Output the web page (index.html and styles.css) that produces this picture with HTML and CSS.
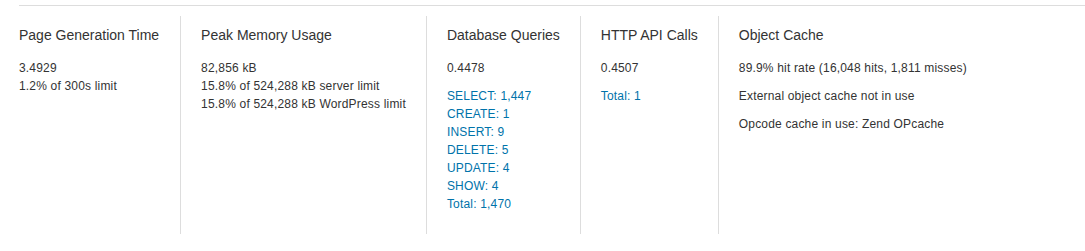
FILE: index.html
```html
<!DOCTYPE html>
<html>
<head>
<meta charset="utf-8">
<link rel="stylesheet" href="styles.css">
</head>
<body>
<div class="panel">
  <div class="overview">
    <section class="sec first">
      <h3>Page Generation Time</h3>
      <p>3.4929<br>1.2% of 300s limit</p>
    </section>
    <section class="sec">
      <h3>Peak Memory Usage</h3>
      <p>82,856 kB<br>15.8% of 524,288 kB server limit<br>15.8% of 524,288 kB WordPress limit</p>
    </section>
    <section class="sec">
      <h3>Database Queries</h3>
      <p>0.4478</p>
      <p><a href="#">SELECT: 1,447</a><br><a href="#">CREATE: 1</a><br><a href="#">INSERT: 9</a><br><a href="#">DELETE: 5</a><br><a href="#">UPDATE: 4</a><br><a href="#">SHOW: 4</a><br><a href="#">Total: 1,470</a></p>
    </section>
    <section class="sec">
      <h3>HTTP API Calls</h3>
      <p>0.4507</p>
      <p><a href="#">Total: 1</a></p>
    </section>
    <section class="sec">
      <h3>Object Cache</h3>
      <p>89.9% hit rate (16,048 hits, 1,811 misses)</p>
      <p>External object cache not in use</p>
      <p>Opcode cache in use: Zend OPcache</p>
    </section>
  </div>
</div>
</body>
</html>
```
FILE: styles.css
```css
html, body {
  margin: 0;
  padding: 0;
  background: #fff;
}
body {
  font-family: "Liberation Sans", Arial, sans-serif;
  color: #333;
  font-size: 12px;
  line-height: 18px;
}
.panel {
  padding: 5px 0 0 19px;
}
.overview {
  border-top: 1px solid #ddd;
  padding-top: 10px;
  display: flex;
  align-items: stretch;
}
.sec {
  padding: 10px 20px 11px 20px;
  border-left: 1px solid #ddd;
}
.sec.first {
  padding-left: 0;
  padding-right: 21px;
  border-left: none;
}
h3 {
  margin: 0 0 15px 0;
  font-size: 14px;
  font-weight: normal;
  line-height: 18px;
  color: #333;
}
p {
  margin: 0 0 10px 0;
  letter-spacing: 0.18px;
}
a {
  color: #0073aa;
  text-decoration: none;
}
```
